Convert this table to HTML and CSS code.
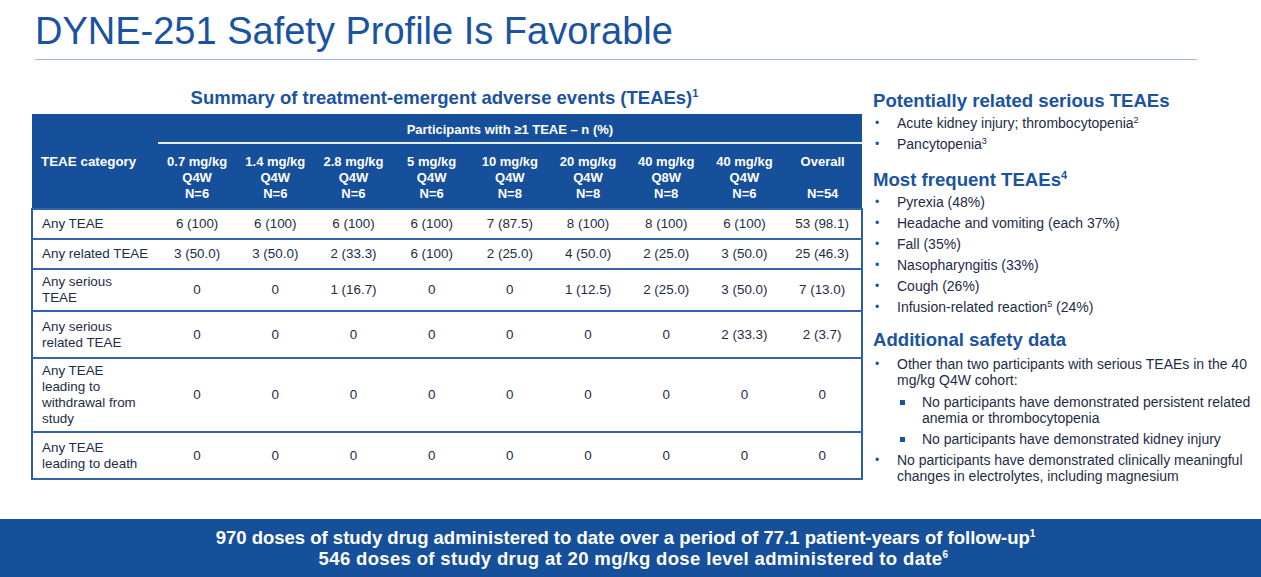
FILE: index.html
```html
<!DOCTYPE html>
<html>
<head>
<meta charset="utf-8">
<link rel="stylesheet" href="styles.css">
</head>
<body>
<div class="slide">
  <header class="title-block">
    <h1 class="title">DYNE-251 Safety Profile Is Favorable</h1>
    <div class="rule"></div>
  </header>
  <main class="content">
    <section class="left">
      <h2 class="table-title">Summary of treatment-emergent adverse events (TEAEs)<sup>1</sup></h2>
      <table class="teae">
        <colgroup>
          <col class="c-cat">
          <col class="c-num"><col class="c-num"><col class="c-num"><col class="c-num"><col class="c-num"><col class="c-num"><col class="c-num"><col class="c-num"><col class="c-num">
        </colgroup>
        <thead>
          <tr class="h1">
            <th rowspan="2" class="cat-head">TEAE category</th>
            <th colspan="9" class="span-head"><div class="span-inner">Participants with ≥1 TEAE – n (%)</div></th>
          </tr>
          <tr class="h2">
            <th>0.7 mg/kg<br>Q4W<br>N=6</th>
            <th>1.4 mg/kg<br>Q4W<br>N=6</th>
            <th>2.8 mg/kg<br>Q4W<br>N=6</th>
            <th>5 mg/kg<br>Q4W<br>N=6</th>
            <th>10 mg/kg<br>Q4W<br>N=8</th>
            <th>20 mg/kg<br>Q4W<br>N=8</th>
            <th>40 mg/kg<br>Q8W<br>N=8</th>
            <th>40 mg/kg<br>Q4W<br>N=6</th>
            <th>Overall<br>&nbsp;<br>N=54</th>
          </tr>
        </thead>
        <tbody>
          <tr class="r1"><td class="cat">Any TEAE</td><td>6 (100)</td><td>6 (100)</td><td>6 (100)</td><td>6 (100)</td><td>7 (87.5)</td><td>8 (100)</td><td>8 (100)</td><td>6 (100)</td><td>53 (98.1)</td></tr>
          <tr class="r2"><td class="cat">Any related TEAE</td><td>3 (50.0)</td><td>3 (50.0)</td><td>2 (33.3)</td><td>6 (100)</td><td>2 (25.0)</td><td>4 (50.0)</td><td>2 (25.0)</td><td>3 (50.0)</td><td>25 (46.3)</td></tr>
          <tr class="r3"><td class="cat">Any serious<br>TEAE</td><td>0</td><td>0</td><td>1 (16.7)</td><td>0</td><td>0</td><td>1 (12.5)</td><td>2 (25.0)</td><td>3 (50.0)</td><td>7 (13.0)</td></tr>
          <tr class="r4"><td class="cat">Any serious<br>related TEAE</td><td>0</td><td>0</td><td>0</td><td>0</td><td>0</td><td>0</td><td>0</td><td>2 (33.3)</td><td>2 (3.7)</td></tr>
          <tr class="r5"><td class="cat">Any TEAE<br>leading to<br>withdrawal from<br>study</td><td>0</td><td>0</td><td>0</td><td>0</td><td>0</td><td>0</td><td>0</td><td>0</td><td>0</td></tr>
          <tr class="r6"><td class="cat">Any TEAE<br>leading to death</td><td>0</td><td>0</td><td>0</td><td>0</td><td>0</td><td>0</td><td>0</td><td>0</td><td>0</td></tr>
        </tbody>
      </table>
    </section>
    <aside class="right">
      <h3 class="side-head">Potentially related serious TEAEs</h3>
      <ul class="bullets b1">
        <li>Acute kidney injury; thrombocytopenia<sup>2</sup></li>
        <li>Pancytopenia<sup>3</sup></li>
      </ul>
      <h3 class="side-head">Most frequent TEAEs<sup>4</sup></h3>
      <ul class="bullets b2">
        <li>Pyrexia (48%)</li>
        <li>Headache and vomiting (each 37%)</li>
        <li>Fall (35%)</li>
        <li>Nasopharyngitis (33%)</li>
        <li>Cough (26%)</li>
        <li>Infusion-related reaction<sup>5</sup> (24%)</li>
      </ul>
      <h3 class="side-head">Additional safety data</h3>
      <ul class="bullets b3">
        <li>Other than two participants with serious TEAEs in the 40 mg/kg Q4W cohort:
          <ul class="sub">
            <li>No participants have demonstrated persistent related anemia or thrombocytopenia</li>
            <li>No participants have demonstrated kidney injury</li>
          </ul>
        </li>
        <li>No participants have demonstrated clinically meaningful changes in electrolytes, including magnesium</li>
      </ul>
    </aside>
  </main>
  <footer class="banner">
    <p class="line1">970 doses of study drug administered to date over a period of 77.1 patient-years of follow-up<sup>1</sup></p>
    <p class="line2">546 doses of study drug at 20 mg/kg dose level administered to date<sup>6</sup></p>
  </footer>
</div>
</body>
</html>
```

FILE: styles.css
```css
* { box-sizing: border-box; }
html, body { margin: 0; padding: 0; background: #fff; }
body { font-family: "Liberation Sans", Arial, sans-serif; color: #1e2b49; }
.slide { width: 1261px; height: 577px; display: flex; flex-direction: column; overflow: hidden; }

.title-block { padding: 10px 64px 0 35px; }
.title { margin: 0; font-weight: 400; font-size: 38px; line-height: 42px; color: #1a53a0; letter-spacing: 0; }
.rule { margin-top: 7px; height: 1px; background: #2b5fa5; border-bottom: 1px solid #9fb6d8; }

.content { display: flex; padding-top: 27px; height: 460px; }
.left { width: 873px; padding-left: 31px; }
.table-title { margin: 0 0 5px 0; text-align: center; font-size: 18.5px; line-height: 22px; font-weight: 700; color: #1a53a0; padding-right: 15px; }
.table-title sup { font-size: 11px; vertical-align: 7px; line-height: 0; }

.teae { border-collapse: collapse; table-layout: fixed; width: 830px; font-size: 13.4px; }
.c-cat { width: 126px; }
.c-num { width: 78.2px; }
.teae thead th { background: #17509a; color: #fff; font-weight: 700; padding: 0; }
.teae .h1 th.span-head { height: 30px; vertical-align: top; }
.span-inner { height: 30px; line-height: 32px; text-align: center; border-bottom: 2px solid #e8eef7; font-size: 13px; }
.teae .cat-head { text-align: left; padding-left: 9px; vertical-align: middle; }
.teae .h2 th { height: 65px; line-height: 16px; text-align: center; vertical-align: middle; padding-top: 3px; font-size: 13px; }
.teae tbody td { text-align: center; vertical-align: middle; line-height: 16px; padding: 0; border-top: 2px solid #3364a9; }
.teae tbody tr { border-left: 2px solid #2c5ea6; border-right: 2px solid #2c5ea6; }
.teae tbody tr:last-child { border-bottom: 2px solid #3364a9; }
.teae td.cat { text-align: left; padding-left: 9px; }
.r1 td, .r2 td { height: 30px; }
.r3 td { height: 42px; }
.r4 td { height: 47px; }
.r5 td { height: 74px; }
.r6 td { height: 47px; }

.right { flex: 1; padding-top: 3px; padding-right: 6px; }
.side-head { margin: 0; font-size: 18.6px; line-height: 22px; font-weight: 700; color: #1a53a0; }
.side-head sup { font-size: 11px; vertical-align: 7px; line-height: 0; font-weight: 700; }
.bullets { list-style: none; margin: 3px 0 17px 0; padding: 0; font-size: 14px; }
.bullets > li { position: relative; padding-left: 24px; line-height: 16px; margin-bottom: 5px; }
.bullets > li::before { content: "•"; position: absolute; left: 2px; top: 0; color: #1a53a0; font-size: 12px; }
.bullets sup { font-size: 9px; vertical-align: 5px; line-height: 0; }
.b2 { margin-bottom: 14px; }
.b3 { margin-top: 5px; }
.sub { list-style: none; margin: 6px 0 0 0; padding: 0; }
.sub li { position: relative; padding-left: 25px; line-height: 16px; margin-bottom: 5px; }
.sub li::before { content: ""; position: absolute; left: 3px; top: 6px; width: 5px; height: 5px; background: #1a53a0; }

.banner { margin-top: auto; height: 58px; background: #17509a; color: #fff; text-align: center; font-weight: 700; font-size: 18.5px; padding-top: 8px; }
.banner p { margin: 0; line-height: 21px; }
.banner .line1 { padding-right: 10px; }
.banner .line2 { letter-spacing: 0.35px; padding-left: 6px; }
.banner sup { font-size: 10px; vertical-align: 7px; line-height: 0; }
```
